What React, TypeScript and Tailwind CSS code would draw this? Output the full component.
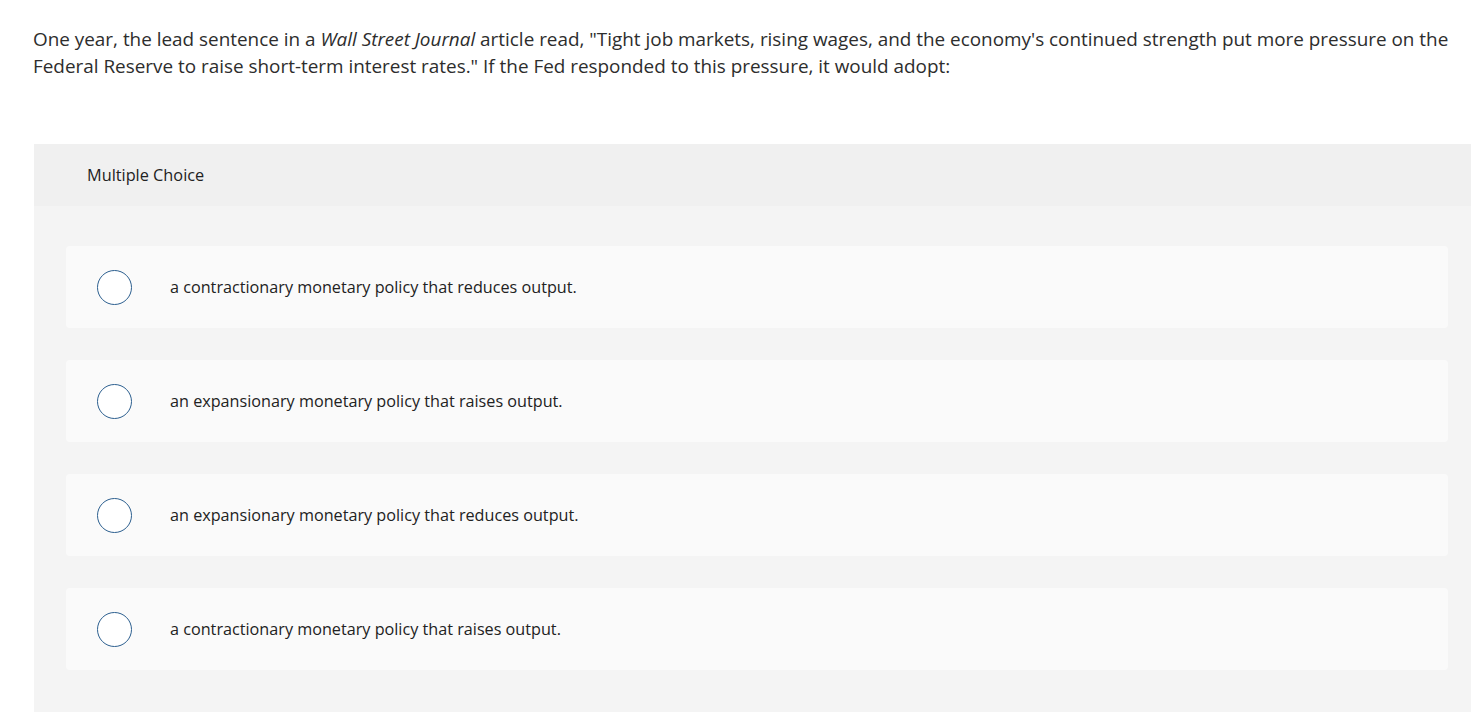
import React from "react";

const options = [
  "a contractionary monetary policy that reduces output.",
  "an expansionary monetary policy that raises output.",
  "an expansionary monetary policy that reduces output.",
  "a contractionary monetary policy that raises output.",
];

export default function App() {
  return (
    <div
      className="min-h-[712px] bg-white text-[#333333] overflow-hidden"
      style={{ fontFamily: "'Open Sans', Lato, Arial, sans-serif" }}
    >
      <p className="pl-[33px] pr-[4px] pt-[26px] text-[18.9px] leading-[27px] text-[#2d2d2d] whitespace-nowrap">
        One year, the lead sentence in a <i>Wall Street Journal</i> article read, "Tight job markets, rising wages, and the economy's continued strength put more pressure on the
        <br />
        Federal Reserve to raise short-term interest rates." If the Fed responded to this pressure, it would adopt:
      </p>
      <div className="ml-[34px] mt-[64px] bg-[#f4f4f4] min-h-[568px]">
        <div className="h-[62px] bg-[#f0f0f0] flex items-center pl-[53px] text-[16.3px] text-[#222222]">
          Multiple Choice
        </div>
        <div className="pt-[40px] pl-[32px] pr-[23px] flex flex-col gap-[32px]">
          {options.map((o) => (
            <div
              key={o}
              className="h-[82px] bg-[#fafafa] rounded-[4px] flex items-center pl-[31px]"
            >
              <span className="w-[35px] h-[35px] rounded-full border-[1.5px] border-[#2c5f8f] bg-white shrink-0" />
              <span className="ml-[38px] text-[16.2px] text-[#222222]">{o}</span>
            </div>
          ))}
        </div>
      </div>
    </div>
  );
}
